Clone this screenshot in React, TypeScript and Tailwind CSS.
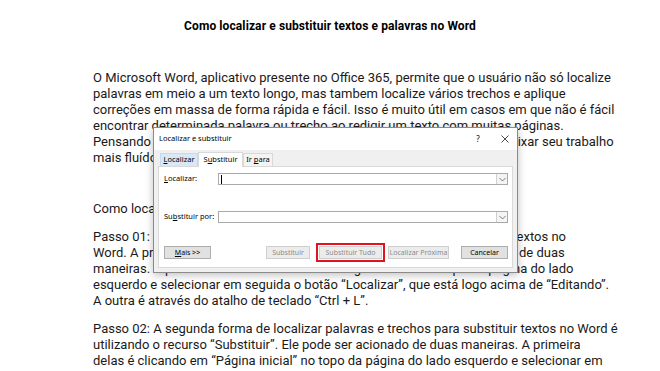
import React from "react";

const bodyFont = { fontFamily: "Roboto, 'Noto Sans', sans-serif" };

function Line({ children }: { children: React.ReactNode }) {
  return <div className="h-4 leading-4 whitespace-nowrap">{children}</div>;
}

function Chevron() {
  return (
    <svg width="7" height="5" viewBox="0 0 7 5" className="block">
      <path d="M0.5 1 L3.5 4 L6.5 1" fill="none" stroke="#606060" strokeWidth="0.8" />
    </svg>
  );
}

function Combo({ caret }: { caret?: boolean }) {
  return (
    <div className="flex h-[12px] w-[291px] items-stretch border border-[#a9a9a9] bg-white">
      <div className="flex-1 flex items-center pl-[2px]">
        {caret ? <div className="h-[9px] w-px bg-black" /> : null}
      </div>
      <div className="w-[11px] flex items-center justify-center border-l border-[#d0d0d0] bg-[#f4f4f4]">
        <Chevron />
      </div>
    </div>
  );
}

function Btn({ children, disabled, w }: { children: React.ReactNode; disabled?: boolean; w: string }) {
  return (
    <div
      className={
        "h-[13px] flex items-center justify-center border text-[7px] leading-none " +
        w +
        (disabled ? " border-[#cfcfcf] bg-[#ececec] text-[#8c8c8c]" : " border-[#adadad] bg-[#e1e1e1] text-black")
      }
    >
      {children}
    </div>
  );
}

export default function App() {
  return (
    <div className="relative w-[660px] h-[371px] overflow-hidden bg-white text-[#1a1a1a]" style={bodyFont}>
      <div className="pt-[19px] text-center text-[12px] font-bold leading-[14px] tracking-[0.1px] text-black">
        Como localizar e substituir textos e palavras no Word
      </div>
      <div className="pl-[93px] pt-[37px] text-[13px]">
        <Line>O Microsoft Word, aplicativo presente no Office 365, permite que o usuário não só localize</Line>
        <Line>palavras em meio a um texto longo, mas tambem localize vários trechos e aplique</Line>
        <Line>correções em massa de forma rápida e fácil. Isso é muito útil em casos em que não é fácil</Line>
        <Line>encontrar determinada palavra ou trecho ao redigir um texto com muitas páginas.</Line>
        <Line>Pensando nisso, confira como localizar e substituir palavras no Word e deixar seu trabalho</Line>
        <Line>mais fluído.</Line>
        <div className="h-[35px]" />
        <Line>Como localizar e substituir textos no Word</Line>
        <div className="h-[12px]" />
        <Line>Passo 01: Há duas formas de localizar e substituir palavras e trechos de textos no</Line>
        <Line>Word. A primeira é utilizando o recurso “Localizar”. Ele pode ser acionado de duas</Line>
        <Line>maneiras. A primeira delas é clicando em “Página inicial” no topo da página do lado</Line>
        <Line>esquerdo e selecionar em seguida o botão “Localizar”, que está logo acima de “Editando”.</Line>
        <Line>A outra é através do atalho de teclado “Ctrl + L”.</Line>
        <div className="h-[12px]" />
        <Line>Passo 02: A segunda forma de localizar palavras e trechos para substituir textos no Word é</Line>
        <Line>utilizando o recurso “Substituir”. Ele pode ser acionado de duas maneiras. A primeira</Line>
        <Line>delas é clicando em “Página inicial” no topo da página do lado esquerdo e selecionar em</Line>
        <Line>seguida o botão “Substituir”, que está logo acima de “Editando”. A outra é através do</Line>
      </div>

      {/* Dialog overlay */}
      <div
        className="absolute left-[153px] top-[127px] w-[365px] h-[146px] border border-[#8a8a8a] bg-[#f0f0f0] shadow-[0_2px_8px_rgba(0,0,0,0.25)] flex flex-col text-[7.5px] text-black"
        style={{ fontFamily: "'Noto Sans', 'Open Sans', sans-serif" }}
      >
        <div className="h-[22px] bg-white flex items-center pl-[5px] pr-[8px]">
          <span className="flex-1">Localizar e substituir</span>
          <span className="w-[10px] text-center mr-[18px] text-[8px]">?</span>
          <svg width="8" height="8" viewBox="0 0 8 8" className="block">
            <path d="M0.5 0.5 L7.5 7.5 M7.5 0.5 L0.5 7.5" stroke="#222" strokeWidth="0.8" />
          </svg>
        </div>
        <div className="flex-1 flex flex-col px-[4px] pt-[2px] pb-[4px]">
          <div className="flex items-end h-[14px] pl-[2px]">
            <div className="h-[13px] w-[38px] flex items-center justify-center bg-[#d8e8f7] border border-[#c4d9ee] border-b-0">
              <span><span className="underline">L</span>ocalizar</span>
            </div>
            <div className="relative top-px h-[15px] w-[45px] flex items-center justify-center bg-white border border-[#d9d9d9] border-b-0">
              <span>S<span className="underline">u</span>bstituir</span>
            </div>
            <div className="h-[13px] w-[30px] flex items-center justify-center bg-[#f4f4f4] border border-[#d9d9d9] border-b-0">
              <span>Ir <span className="underline">p</span>ara</span>
            </div>
          </div>
          <div className="flex-1 bg-white border border-[#d9d9d9] flex flex-col pl-[5px] pr-[4px] pt-[6px] pb-[5px]">
            <div className="flex items-center">
              <span className="w-[54px]"><span className="underline">L</span>ocalizar:</span>
              <Combo caret />
            </div>
            <div className="flex items-center mt-[26px]">
              <span className="w-[54px]">Su<span className="underline">b</span>stituir por:</span>
              <Combo />
            </div>
            <div className="flex-1" />
            <div className="flex items-center">
              <Btn w="w-[47px]">
                <span><span className="underline">M</span>ais &gt;&gt;</span>
              </Btn>
              <div className="flex-1" />
              <Btn w="w-[44px]" disabled>Substituir</Btn>
              <div className="ml-[6px] p-px border-2 border-[#e0141e]">
                <Btn w="w-[63px]" disabled>Substituir Tudo</Btn>
              </div>
              <div className="ml-[3px]">
                <Btn w="w-[61px]" disabled>Localizar Próxima</Btn>
              </div>
              <div className="ml-[12px]">
                <Btn w="w-[47px]">Cancelar</Btn>
              </div>
            </div>
          </div>
        </div>
      </div>
    </div>
  );
}
